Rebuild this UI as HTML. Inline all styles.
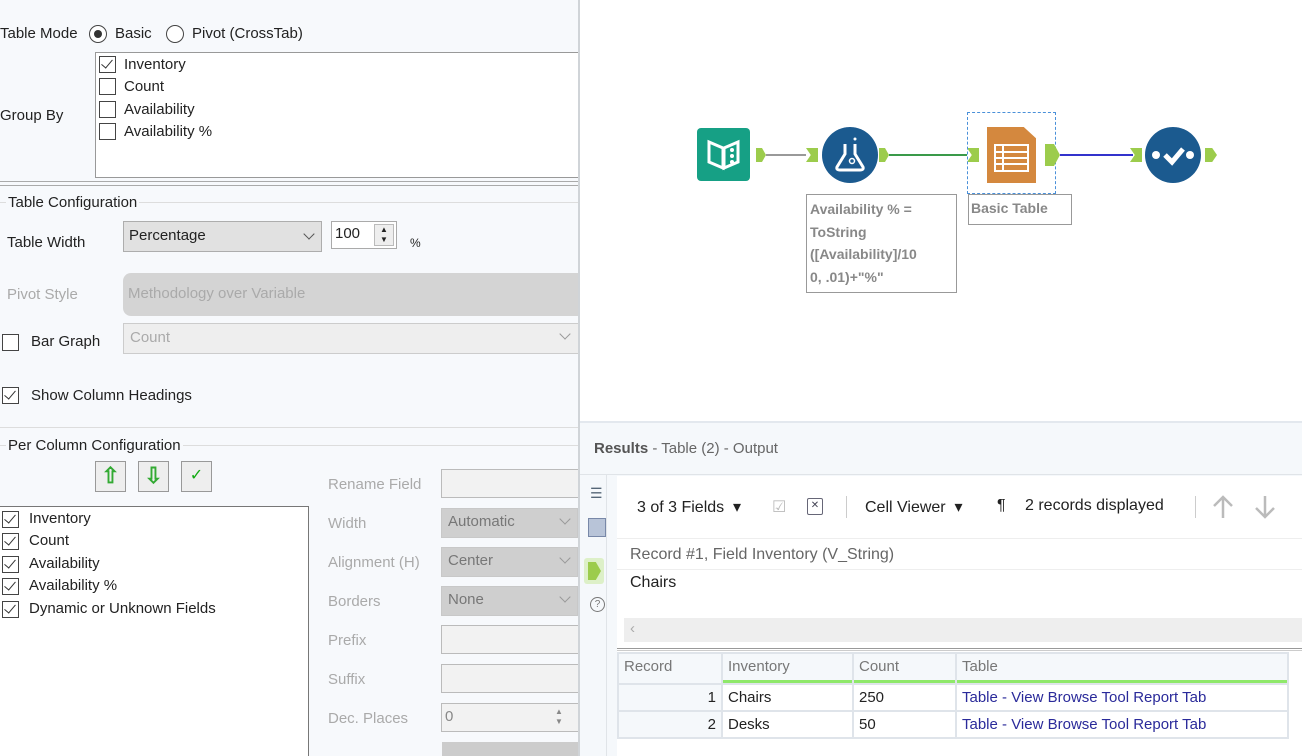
<!DOCTYPE html>
<html><head><meta charset="utf-8"><style>
*{box-sizing:border-box;margin:0;padding:0}
body{width:1302px;height:756px;position:relative;overflow:hidden;background:#fff;font-family:"Liberation Sans",sans-serif;font-size:15px;color:#222}
.a{position:absolute;white-space:nowrap}
.cb{position:absolute;width:17px;height:17px;border:1.5px solid #444;background:#fff}
.cb.c::after{content:"";position:absolute;left:4px;top:0px;width:5px;height:10px;border:solid #333;border-width:0 1.6px 1.6px 0;transform:rotate(40deg)}
.g{color:#aaa}
.box{position:absolute;border:1px solid #bbb;background:#f2f2f2}
.dd{position:absolute;background:#cfcfcf;border:1px solid #c8c8c8;color:#777;padding:4px 6px}
.chev{position:absolute;right:8px;top:6px;width:8px;height:8px;border:solid #999;border-width:0 1.3px 1.3px 0;transform:rotate(45deg)}
#lp{position:absolute;left:0;top:0;width:578px;height:756px;background:#f7f9fc;overflow:hidden}
</style></head><body>
<div id="lp">
<div class="a" style="left:0;top:25px">Table Mode</div>
<div class="a" style="left:89px;top:25px;width:18px;height:18px;border:1.5px solid #444;border-radius:50%;background:#fff"><div style="position:absolute;left:3.5px;top:3.5px;width:8px;height:8px;border-radius:50%;background:#333"></div></div>
<div class="a" style="left:115px;top:25px">Basic</div>
<div class="a" style="left:166px;top:25px;width:18px;height:18px;border:1.5px solid #444;border-radius:50%;background:#fff"></div>
<div class="a" style="left:192px;top:25px">Pivot (CrossTab)</div>
<div class="a" style="left:0;top:107px">Group By</div>
<div class="a" style="left:95px;top:52px;width:500px;height:126px;border:1px solid #999;background:#fff"></div>
<div class="cb c" style="left:99px;top:56px"></div><div class="a" style="left:124px;top:56px">Inventory</div>
<div class="cb" style="left:99px;top:78px"></div><div class="a" style="left:124px;top:78px">Count</div>
<div class="cb" style="left:99px;top:101px"></div><div class="a" style="left:124px;top:101px">Availability</div>
<div class="cb" style="left:99px;top:123px"></div><div class="a" style="left:124px;top:123px">Availability %</div>
<div class="a" style="left:0;top:181px;width:578px;height:5px;border-top:1px solid #aaa;border-bottom:1px solid #aaa"></div>
<div class="a" style="left:0;top:202px;width:578px;height:1px;background:#ddd"></div>
<div class="a" style="left:6px;top:194px;background:#f7f9fc;padding:0 2px">Table Configuration</div>
<div class="a" style="left:7px;top:234px">Table Width</div>
<div class="a" style="left:123px;top:221px;width:199px;height:31px;background:#e1e1e1;border:1px solid #adadad;padding:5px 5px">Percentage<div class="chev" style="border-color:#555;top:8px"></div></div>
<div class="a" style="left:331px;top:221px;width:66px;height:28px;background:#fff;border:1px solid #aaa;padding:3px 3px">100
<div style="position:absolute;right:2px;top:2px;width:20px;height:22px;background:#eee;border:1px solid #bbb;font-size:8px;line-height:10px;text-align:center">▲<br>▼</div></div>
<div class="a" style="left:410px;top:236px;font-size:12px">%</div>
<div class="a g" style="left:7px;top:286px">Pivot Style</div>
<div class="a" style="left:123px;top:273px;width:480px;height:43px;background:#d4d4d4;border-radius:8px 0 0 8px;color:#aaa;padding:12px 5px">Methodology over Variable</div>
<div class="cb" style="left:2px;top:334px"></div><div class="a" style="left:31px;top:333px">Bar Graph</div>
<div class="a" style="left:123px;top:323px;width:455px;height:31px;background:#eee;border:1px solid #ccc;border-right:none;color:#aaa;padding:5px 6px">Count<div class="chev" style="right:9px"></div></div>
<div class="cb c" style="left:2px;top:387px"></div><div class="a" style="left:31px;top:387px">Show Column Headings</div>
<div class="a" style="left:0;top:427px;width:578px;height:1px;background:#ddd"></div>
<div class="a" style="left:0;top:445px;width:578px;height:1px;background:#ddd"></div>
<div class="a" style="left:6px;top:437px;background:#f7f9fc;padding:0 2px">Per Column Configuration</div>
<div class="a" style="left:95px;top:461px;width:31px;height:31px;border:1px solid #999;background:#eee;text-align:center;color:#3a3;font-size:22px;font-weight:bold;line-height:28px">⇧</div>
<div class="a" style="left:138px;top:461px;width:31px;height:31px;border:1px solid #999;background:#eee;text-align:center;color:#3a3;font-size:22px;font-weight:bold;line-height:28px">⇩</div>
<div class="a" style="left:181px;top:461px;width:31px;height:31px;border:1px solid #999;background:#eee;text-align:center;color:#1a1;font-size:16px;line-height:28px">✓</div>
<div class="a" style="left:-2px;top:506px;width:311px;height:260px;border:1px solid #777;background:#fff"></div>
<div class="cb c" style="left:2px;top:511px"></div><div class="a" style="left:29px;top:510px">Inventory</div>
<div class="cb c" style="left:2px;top:533px"></div><div class="a" style="left:29px;top:532px">Count</div>
<div class="cb c" style="left:2px;top:556px"></div><div class="a" style="left:29px;top:555px">Availability</div>
<div class="cb c" style="left:2px;top:578px"></div><div class="a" style="left:29px;top:577px">Availability %</div>
<div class="cb c" style="left:2px;top:601px"></div><div class="a" style="left:29px;top:600px">Dynamic or Unknown Fields</div>
<div class="a g" style="left:328px;top:476px">Rename Field</div><div class="box" style="left:441px;top:469px;width:145px;height:29px"></div>
<div class="a g" style="left:328px;top:515px">Width</div><div class="dd" style="left:441px;top:508px;width:137px;height:30px">Automatic<div class="chev"></div></div>
<div class="a g" style="left:328px;top:554px">Alignment (H)</div><div class="dd" style="left:441px;top:547px;width:137px;height:30px">Center<div class="chev"></div></div>
<div class="a g" style="left:328px;top:593px">Borders</div><div class="dd" style="left:441px;top:586px;width:137px;height:30px">None<div class="chev"></div></div>
<div class="a g" style="left:328px;top:632px">Prefix</div><div class="box" style="left:441px;top:625px;width:145px;height:29px"></div>
<div class="a g" style="left:328px;top:671px">Suffix</div><div class="box" style="left:441px;top:664px;width:145px;height:29px"></div>
<div class="a g" style="left:328px;top:710px">Dec. Places</div><div class="box" style="left:441px;top:703px;width:145px;height:29px;color:#888;padding:4px 3px">0<div style="position:absolute;left:113px;top:3px;font-size:8px;line-height:10px;color:#888">▲<br>▼</div></div>
<div class="a" style="left:442px;top:742px;width:140px;height:20px;background:#ccc"></div>
</div>
<div class="a" style="left:578px;top:0;width:2px;height:756px;background:#d0d4d8"></div>
<!-- canvas -->
<div class="a" style="left:697px;top:128px;width:53px;height:53px;background:#16a085;border-radius:4px"></div>
<svg class="a" style="left:697px;top:128px" width="53" height="53"><path d="M12 14 L26 20 L26 40 L12 34Z M41 14 L27 20 L27 40 L41 34Z" fill="none" stroke="#fff" stroke-width="3"/><circle cx="35" cy="22" r="2" fill="#fff"/><circle cx="35" cy="28" r="2" fill="#fff"/><circle cx="35" cy="34" r="2" fill="#fff"/></svg>
<div class="a" style="left:756px;top:148px;width:10px;height:14px;background:#9ccc4c;clip-path:polygon(0 0,60% 0,100% 50%,60% 100%,0 100%)"></div>
<div class="a" style="left:766px;top:154px;width:40px;height:2px;background:#999"></div>
<div class="a" style="left:806px;top:148px;width:12px;height:14px;background:#9ccc4c;clip-path:polygon(0 0,100% 0,100% 100%,0 100%,40% 50%)"></div>
<div class="a" style="left:822px;top:127px;width:56px;height:56px;border-radius:50%;background:#1b5a8f"></div>
<svg class="a" style="left:822px;top:127px" width="56" height="56"><path d="M23 17 L23 27 L15 40 Q14 43 18 43 L38 43 Q42 43 41 40 L33 27 L33 17" fill="none" stroke="#fff" stroke-width="3"/><circle cx="30" cy="34" r="2.5" fill="none" stroke="#fff" stroke-width="1.5"/><circle cx="33" cy="12" r="1.5" fill="#fff"/></svg>
<div class="a" style="left:879px;top:148px;width:10px;height:14px;background:#9ccc4c;clip-path:polygon(0 0,60% 0,100% 50%,60% 100%,0 100%)"></div>
<div class="a" style="left:889px;top:154px;width:78px;height:2px;background:#3a9a4a"></div>
<div class="a" style="left:967px;top:148px;width:12px;height:14px;background:#9ccc4c;clip-path:polygon(0 0,100% 0,100% 100%,0 100%,40% 50%)"></div>
<div class="a" style="left:967px;top:112px;width:89px;height:82px;border:1px dashed #4a90d9"></div>
<div class="a" style="left:987px;top:127px;width:49px;height:56px;background:#d4883e;clip-path:polygon(0 0,75% 0,100% 20%,100% 100%,0 100%)"></div>
<svg class="a" style="left:987px;top:127px" width="49" height="56"><g stroke="#fff" stroke-width="2" fill="none"><rect x="8" y="18" width="33" height="26"/><path d="M8 25H41M8 31H41M8 37H41M16 18V44"/></g></svg>
<div class="a" style="left:1045px;top:144px;width:15px;height:22px;background:#9ccc4c;clip-path:polygon(0 0,60% 0,100% 50%,60% 100%,0 100%)"></div>
<div class="a" style="left:1060px;top:154px;width:73px;height:2px;background:#3333cc"></div>
<div class="a" style="left:1130px;top:148px;width:12px;height:14px;background:#9ccc4c;clip-path:polygon(0 0,100% 0,100% 100%,0 100%,40% 50%)"></div>
<div class="a" style="left:1145px;top:127px;width:56px;height:56px;border-radius:50%;background:#1b5a8f"></div>
<svg class="a" style="left:1145px;top:127px" width="56" height="56"><circle cx="11" cy="28" r="4" fill="#fff"/><circle cx="45" cy="28" r="4" fill="#fff"/><path d="M20 28 L27 35 L38 22" fill="none" stroke="#fff" stroke-width="5"/></svg>
<div class="a" style="left:1205px;top:148px;width:12px;height:14px;background:#9ccc4c;clip-path:polygon(0 0,60% 0,100% 50%,60% 100%,0 100%)"></div>
<div class="a" style="left:806px;top:194px;width:151px;height:99px;border:1px solid #999;background:#fff;color:#888;font-weight:bold;font-size:14px;line-height:22.5px;padding:3px;white-space:normal">Availability % =<br>ToString<br>([Availability]/10<br>0, .01)+"%"</div>
<div class="a" style="left:968px;top:194px;width:104px;height:31px;border:1px solid #999;background:#fff;color:#888;font-weight:bold;font-size:14px;padding:5px 2px">Basic Table</div>
<!-- results -->
<div class="a" style="left:580px;top:421px;width:722px;height:335px;background:#f5f8fb;border-top:2px solid #e3e8ee"></div>
<div class="a" style="left:594px;top:440px;color:#666"><b style="color:#555">Results</b> - Table (2) - Output</div>
<div class="a" style="left:580px;top:474px;width:722px;height:1px;background:#e0e4e8"></div>
<div class="a" style="left:606px;top:475px;width:1px;height:281px;background:#e0e4e8"></div>
<div class="a" style="left:590px;top:485px;color:#567;font-size:14px">☰</div>
<div class="a" style="left:588px;top:518px;width:18px;height:19px;background:#b8c4d8;border:1px solid #7888a8"></div>
<div class="a" style="left:584px;top:558px;width:20px;height:26px;background:#ddf0c8;border-radius:3px"></div>
<div class="a" style="left:588px;top:562px;width:13px;height:18px;background:#9ccc4c;clip-path:polygon(0 0,60% 0,100% 50%,60% 100%,0 100%)"></div>
<div class="a" style="left:590px;top:597px;width:15px;height:15px;border:1.3px solid #777;border-radius:50%;font-size:10px;text-align:center;line-height:13px;color:#777">?</div>
<div class="a" style="left:617px;top:476px;width:685px;height:280px;background:#fff"></div>
<div class="a" style="left:637px;top:497px;font-size:16px">3 of 3 Fields&nbsp; ▾</div>
<div class="a" style="left:772px;top:497px;color:#bbb;font-size:16px">☑</div>
<div class="a" style="left:807px;top:498px;width:16px;height:17px;border:1.5px solid #667;border-radius:2px;font-size:10px;text-align:center;line-height:14px;color:#445">✕</div>
<div class="a" style="left:846px;top:496px;width:1px;height:22px;background:#ccc"></div>
<div class="a" style="left:865px;top:497px;font-size:16px">Cell Viewer&nbsp; ▾</div>
<div class="a" style="left:997px;top:497px;font-size:16px">¶</div>
<div class="a" style="left:1025px;top:497px;font-size:16px">2 records displayed</div>
<div class="a" style="left:1195px;top:496px;width:1px;height:22px;background:#ccc"></div>
<svg class="a" style="left:1210px;top:494px" width="70" height="26"><path d="M13 24V3M4 12L13 3L22 12M55 2V23M46 14L55 23L64 14" fill="none" stroke="#bbb" stroke-width="2.5"/></svg>
<div class="a" style="left:617px;top:538px;width:685px;height:1px;background:#eee"></div>
<div class="a" style="left:630px;top:546px;color:#666;font-size:16px">Record #1, Field Inventory (V_String)</div>
<div class="a" style="left:617px;top:569px;width:685px;height:1px;background:#eee"></div>
<div class="a" style="left:630px;top:574px;font-size:16px">Chairs</div>
<div class="a" style="left:624px;top:618px;width:678px;height:24px;background:#eee;color:#aaa;padding:2px 6px">‹</div>
<div class="a" style="left:617px;top:648px;width:685px;height:3px;border-top:1px solid #999;border-bottom:1px solid #ccc"></div>
<div class="a" style="left:617px;top:652px;width:672px;height:87px;background:#dfe4ea"></div>
<div class="a" style="left:619px;top:654px;width:102px;height:29px;background:#f5f8fb;color:#777;padding:4px 5px">Record</div>
<div class="a" style="left:723px;top:654px;width:129px;height:29px;background:#f5f8fb;color:#777;padding:4px 5px;border-bottom:3px solid #8fe86a">Inventory</div>
<div class="a" style="left:854px;top:654px;width:101px;height:29px;background:#f5f8fb;color:#777;padding:4px 5px;border-bottom:3px solid #8fe86a">Count</div>
<div class="a" style="left:957px;top:654px;width:330px;height:29px;background:#f5f8fb;color:#777;padding:4px 5px;border-bottom:3px solid #8fe86a">Table</div>
<div class="a" style="left:619px;top:685px;width:102px;height:25px;background:#f5f8fb;text-align:right;padding:4px 5px">1</div>
<div class="a" style="left:723px;top:685px;width:129px;height:25px;background:#fff;padding:4px 5px">Chairs</div>
<div class="a" style="left:854px;top:685px;width:101px;height:25px;background:#fff;padding:4px 5px">250</div>
<div class="a" style="left:957px;top:685px;width:330px;height:25px;background:#fff;padding:4px 5px;color:#2a2a9a">Table - View Browse Tool Report Tab</div>
<div class="a" style="left:619px;top:712px;width:102px;height:25px;background:#f5f8fb;text-align:right;padding:4px 5px">2</div>
<div class="a" style="left:723px;top:712px;width:129px;height:25px;background:#fff;padding:4px 5px">Desks</div>
<div class="a" style="left:854px;top:712px;width:101px;height:25px;background:#fff;padding:4px 5px">50</div>
<div class="a" style="left:957px;top:712px;width:330px;height:25px;background:#fff;padding:4px 5px;color:#2a2a9a">Table - View Browse Tool Report Tab</div>
</body></html>
